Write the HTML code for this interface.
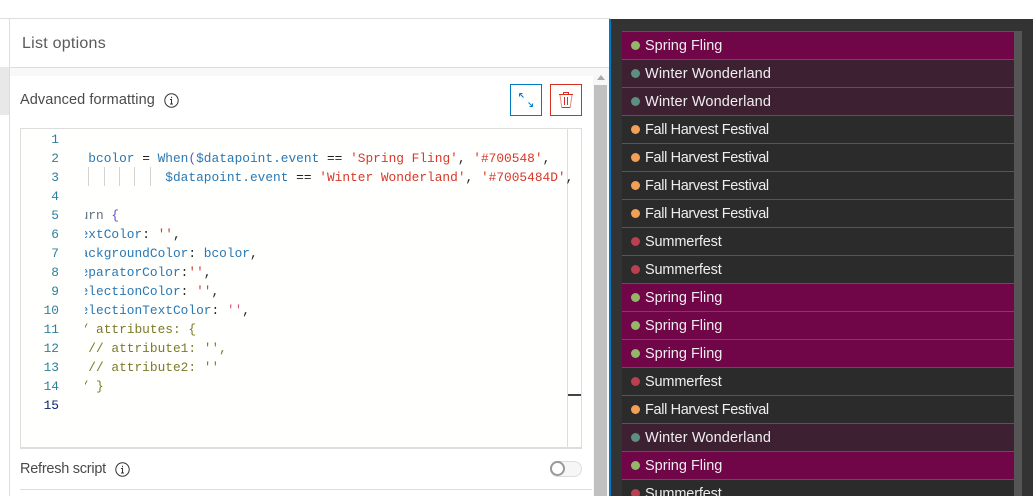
<!DOCTYPE html>
<html><head><meta charset="utf-8">
<style>
html,body{margin:0;padding:0;background:#fff;width:1033px;height:496px;overflow:hidden}
#w{position:absolute;left:0;top:0;width:1033px;height:496px;overflow:hidden;font-family:"Liberation Sans",sans-serif}
.a{position:absolute}
.ln{position:absolute;left:30px;width:29px;text-align:right;font:12.83px/19px "Liberation Mono",monospace;color:#2f7f9c;height:19px}
.clip{position:absolute;left:85px;top:130px;width:490px;height:316px;overflow:hidden}
.c{position:absolute;white-space:pre;font:12.83px/19px "Liberation Mono",monospace;color:#2a78b4;left:-27.5px}
.k{color:#222}.s{color:#d8382a}.p{color:#6a4fc4}.o{color:#7c7a28}.q{color:#e0508a}
.r{position:absolute;left:622px;width:392px;height:27px;border-top:1px solid #555;color:#eee;font-size:14.5px;line-height:27px;white-space:nowrap}
.r i{position:absolute;left:9px;top:9px;width:9px;height:9px;border-radius:50%}
.r span{position:absolute;left:23px;top:1px}
.sp{background:#700548}.wi{background:#3e2033;letter-spacing:.13px}.fa{background:#2b2b2b;letter-spacing:-.36px}.su{background:#2b2b2b;letter-spacing:-.15px}
.sp i{background:#93b767}.wi i{background:#5b8f80}.fa i{background:#f2a057}.su i{background:#b84050}
</style></head><body><div id="w">
<!-- top + frame -->
<div class="a" style="left:0;top:18px;width:611px;height:1px;background:#ddd"></div>
<div class="a" style="left:9px;top:19px;width:1px;height:477px;background:#ddd"></div>
<div class="a" style="left:0;top:67px;width:9px;height:48px;background:#e8e8e8"></div>
<div class="a" style="left:10px;top:67px;width:599px;height:1px;background:#ddd"></div>
<div class="a" style="left:10px;top:68px;width:599px;height:8px;background:#f8f8f8"></div>
<div class="a" style="left:22px;top:35px;font-size:16px;line-height:18px;color:#5a5a5a;letter-spacing:.25px;white-space:nowrap">List options</div>
<div class="a" style="left:20px;top:92px;font-size:14.5px;line-height:17px;color:#4a4a4a;letter-spacing:.1px;white-space:nowrap">Advanced formatting</div>
<svg class="a" style="left:164px;top:93px" width="15" height="15" viewBox="0 0 15 15" fill="none" stroke="#333"><circle cx="7.5" cy="7.5" r="6.7"/><path d="M6 6.5h1.5v4.5M6 11h3M7.5 3.7v1.4"/></svg>
<!-- buttons -->
<div class="a" style="left:510px;top:84px;width:30px;height:30px;border:1px solid #007ac2;background:#fff"></div>
<svg class="a" style="left:517px;top:91px" width="18" height="18" viewBox="0 0 18 18" fill="none" stroke="#007ac2" stroke-width="1"><path d="M2.500 2.500l4 4M2.500 2.500h3M2.500 2.500v3M15.500 15.500l-4-4M15.500 15.500h-3M15.500 15.500v-3"/></svg>
<div class="a" style="left:550px;top:84px;width:30px;height:30px;border:1px solid #d83020;background:#fff"></div>
<svg class="a" style="left:557px;top:91px" width="18" height="18" viewBox="0 0 18 18" fill="none" stroke="#d83020" stroke-width="1"><path d="M2 3.500h14M6.500 3.300V1.500h5v1.800M4.800 16.500h8.400M7.500 6v8M10.500 6v8"/><path d="M3 4l1.800 12.500M15 4l-1.800 12.500" opacity=".55"/></svg>
<!-- editor -->
<div class="a" style="left:20px;top:128px;width:560px;height:318px;border:1px solid #ddd;border-bottom-width:2px;background:#fffffd"></div>
<div class="a" style="left:567px;top:129px;width:1px;height:318px;background:#ddd"></div>
<div class="a" style="left:568px;top:394px;width:13px;height:2px;background:#444"></div>
<div class="ln" style="top:130px">1</div><div class="ln" style="top:149px">2</div><div class="ln" style="top:168px">3</div><div class="ln" style="top:187px">4</div><div class="ln" style="top:206px">5</div><div class="ln" style="top:225px">6</div><div class="ln" style="top:244px">7</div><div class="ln" style="top:263px">8</div><div class="ln" style="top:282px">9</div><div class="ln" style="top:301px">10</div><div class="ln" style="top:320px">11</div><div class="ln" style="top:339px">12</div><div class="ln" style="top:358px">13</div><div class="ln" style="top:377px">14</div><div class="ln" style="top:396px;color:#0b216f">15</div>
<div class="clip">
<div class="c" style="top:19px">var bcolor <span class="k">=</span> When<span class="p">(</span>$datapoint.event <span class="k">==</span> <span class="s">'Spring Fling'</span><span class="k">,</span> <span class="s">'#700548'</span><span class="k">,</span></div>
<div class="c" style="top:38px">              $datapoint.event <span class="k">==</span> <span class="s">'Winter Wonderland'</span><span class="k">,</span> <span class="s">'#7005484D'</span><span class="k">,</span></div>
<div class="c" style="top:76px"><span style="color:#5f6f80">return</span> <span class="p">{</span></div>
<div class="c" style="top:95px">  textColor<span class="k">:</span> <span class="s">''</span><span class="k">,</span></div>
<div class="c" style="top:114px">  backgroundColor<span class="k">:</span> bcolor<span class="k">,</span></div>
<div class="c" style="top:133px">  separatorColor<span class="k">:</span><span class="s">''</span><span class="k">,</span></div>
<div class="c" style="top:152px">  selectionColor<span class="k">:</span> <span class="s">''</span><span class="k">,</span></div>
<div class="c" style="top:171px">  selectionTextColor<span class="k">:</span> <span class="q">''</span><span class="k">,</span></div>
<div class="c o" style="top:190px">  // attributes: {</div>
<div class="c o" style="top:209px">    // attribute1: '',</div>
<div class="c o" style="top:228px">    // attribute2: ''</div>
<div class="c o" style="top:247px">  // }</div>
</div>
<div class="a" style="left:88px;top:167px;width:1px;height:19px;background:#d3d3d3"></div>
<div class="a" style="left:104px;top:167px;width:1px;height:19px;background:#d3d3d3"></div>
<div class="a" style="left:119px;top:167px;width:1px;height:19px;background:#d3d3d3"></div>
<div class="a" style="left:134px;top:167px;width:1px;height:19px;background:#d3d3d3"></div>
<div class="a" style="left:150px;top:167px;width:1px;height:19px;background:#d3d3d3"></div>
<!-- refresh -->
<div class="a" style="left:20px;top:461px;font-size:14.5px;line-height:17px;color:#4a4a4a;letter-spacing:-.25px;white-space:nowrap">Refresh script</div>
<svg class="a" style="left:115px;top:462px" width="15" height="15" viewBox="0 0 15 15" fill="none" stroke="#333"><circle cx="7.5" cy="7.500" r="6.700"/><path d="M6 6.500h1.500v4.500M6 11h3M7.500 3.700v1.400"/></svg>
<div class="a" style="left:550px;top:461px;width:30px;height:14px;border:1px solid #ddd;border-radius:8px;background:#f6f6f6"></div>
<div class="a" style="left:550px;top:461px;width:11px;height:11px;border:2.500px solid #999;border-radius:50%;background:#fff"></div>
<div class="a" style="left:20px;top:489px;width:572px;height:1px;background:#ddd"></div>
<!-- scrollbar -->
<div class="a" style="left:593px;top:76px;width:16px;height:420px;background:#f7f7f7"></div>
<div class="a" style="left:594px;top:85px;width:13px;height:411px;background:#c0c0c0"></div>
<div class="a" style="left:597px;top:75px;width:0;height:0;border-left:4px solid transparent;border-right:4px solid transparent;border-bottom:5px solid #a9a9a9"></div>
<!-- preview -->
<div class="a" style="left:609px;top:19px;width:2px;height:477px;background:#007ac2"></div>
<div class="a" style="left:611px;top:19px;width:422px;height:477px;background:#333"></div>
<div class="a" style="left:622px;top:31px;width:1px;height:465px;background:#555"></div>
<div class="a" style="left:1014px;top:31px;width:8px;height:465px;background:#555"></div>
<div class="r sp" style="top:31px"><i></i><span>Spring Fling</span></div>
<div class="r wi" style="top:59px"><i></i><span>Winter Wonderland</span></div>
<div class="r wi" style="top:87px"><i></i><span>Winter Wonderland</span></div>
<div class="r fa" style="top:115px"><i></i><span>Fall Harvest Festival</span></div>
<div class="r fa" style="top:143px"><i></i><span>Fall Harvest Festival</span></div>
<div class="r fa" style="top:171px"><i></i><span>Fall Harvest Festival</span></div>
<div class="r fa" style="top:199px"><i></i><span>Fall Harvest Festival</span></div>
<div class="r su" style="top:227px"><i></i><span>Summerfest</span></div>
<div class="r su" style="top:255px"><i></i><span>Summerfest</span></div>
<div class="r sp" style="top:283px"><i></i><span>Spring Fling</span></div>
<div class="r sp" style="top:311px"><i></i><span>Spring Fling</span></div>
<div class="r sp" style="top:339px"><i></i><span>Spring Fling</span></div>
<div class="r su" style="top:367px"><i></i><span>Summerfest</span></div>
<div class="r fa" style="top:395px"><i></i><span>Fall Harvest Festival</span></div>
<div class="r wi" style="top:423px"><i></i><span>Winter Wonderland</span></div>
<div class="r sp" style="top:451px"><i></i><span>Spring Fling</span></div>
<div class="r su" style="top:479px"><i></i><span>Summerfest</span></div>
</div></body></html>
